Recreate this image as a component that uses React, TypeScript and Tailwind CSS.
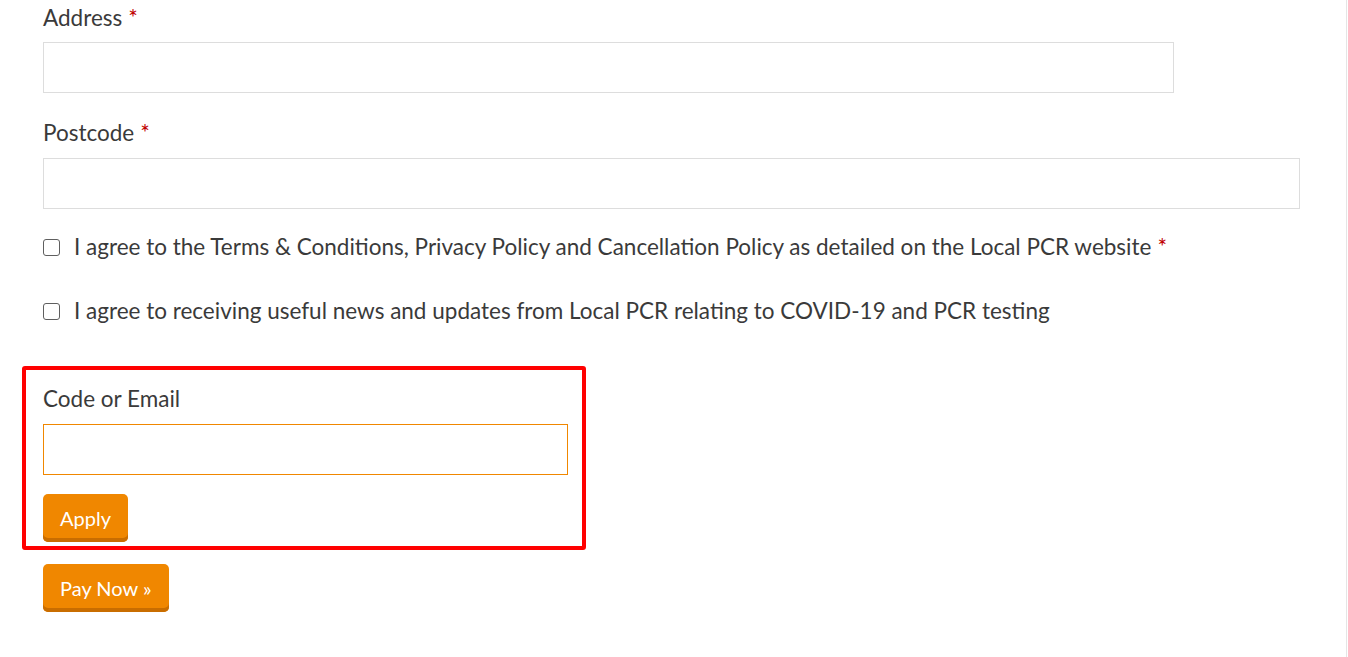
import { useState } from "react";

const font = { fontFamily: '"Lato", "Liberation Sans", sans-serif' };

function Label({ text, required }: { text: string; required?: boolean }) {
  return (
    <label className="block text-[22.5px] leading-[26px] text-[#3a3a3a]">
      {text}
      {required && <span className="ml-1.5 text-[#c00000]">*</span>}
    </label>
  );
}

function Check({ children }: { children: React.ReactNode }) {
  const [on, setOn] = useState(false);
  return (
    <label className="flex items-center text-[22.5px] leading-[26px] text-[#3a3a3a] cursor-pointer">
      <input
        type="checkbox"
        checked={on}
        onChange={() => setOn(!on)}
        className="appearance-none w-[17px] h-[17px] mr-[14px] border-[1.5px] border-[#5f5f5f] rounded-[3px] bg-white shrink-0"
      />
      <span>{children}</span>
    </label>
  );
}

function OrangeButton({ children }: { children: React.ReactNode }) {
  return (
    <button
      type="button"
      className="h-[48px] px-[17px] rounded-[5px] bg-[#f08700] text-white text-[20px] leading-none shadow-[inset_0_-4px_0_#c96d00]"
    >
      {children}
    </button>
  );
}

export default function App() {
  const [code, setCode] = useState("");
  return (
    <div style={font} className="w-[1347px] min-h-screen border-r border-[#e5e5e5] bg-white">
      <div className="pl-[43px] pt-[5px] pb-10">
        <Label text="Address" required />
        <input className="mt-[11px] block w-[1131px] h-[51px] border border-[#dddddd] outline-none" />

        <div className="mt-[27px]">
          <Label text="Postcode" required />
        </div>
        <input className="mt-[12px] block w-[1257px] h-[51px] border border-[#dddddd] outline-none" />

        <div className="mt-[25px]">
          <Check>
            I agree to the Terms &amp; Conditions, Privacy Policy and Cancellation Policy as detailed on the Local PCR website
            <span className="ml-1.5 text-[#c00000]">*</span>
          </Check>
        </div>
        <div className="mt-[38px]">
          <Check>I agree to receiving useful news and updates from Local PCR relating to COVID-19 and PCR testing</Check>
        </div>

        <div className="mt-[42px] -ml-[21px] w-[564px] border-4 border-[#ff0000] rounded-[3px] pt-[16px] pb-[4px] px-[17px]">
          <Label text="Code or Email" />
          <input
            value={code}
            onChange={(e) => setCode(e.target.value)}
            className="mt-[12px] block w-[525px] h-[51px] border border-[#f08700] outline-none px-3 text-[20px]"
          />
          <div className="mt-[19px]">
            <OrangeButton>Apply</OrangeButton>
          </div>
        </div>

        <div className="mt-[14px]">
          <OrangeButton>Pay Now »</OrangeButton>
        </div>
      </div>
    </div>
  );
}
